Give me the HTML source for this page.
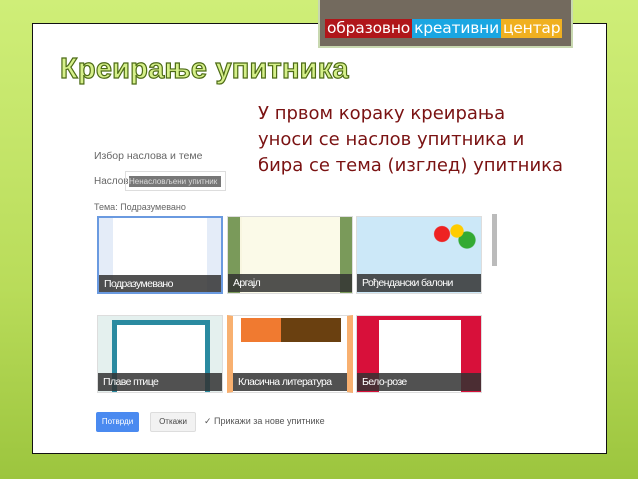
<!DOCTYPE html>
<html><head><meta charset="utf-8"><style>
*{margin:0;padding:0;box-sizing:border-box}
body{width:638px;height:479px;overflow:hidden;position:relative;font-family:"Liberation Sans",sans-serif;
background:linear-gradient(180deg,#cfee78 0%,#b9dc5a 60%,#9cc53e 100%);}
.panel{position:absolute;left:32px;top:23px;width:575px;height:431px;background:#fff;border:1.5px solid #111;}
.logo{position:absolute;left:318px;top:0;width:255px;height:48px;background:#736a5e;border:2px solid #c8d8b0;border-top:none}
.strip{position:absolute;left:5px;top:19px;height:19px;display:flex;font-size:15.5px;line-height:19px;color:#fff;font-family:"DejaVu Sans",sans-serif;letter-spacing:-.2px}
.strip span{padding:0 2px}
.title{position:absolute;left:60px;top:53px;font-size:29px;font-weight:bold;color:#d6f08a;
-webkit-text-stroke:1.2px #4d6b16;letter-spacing:.2px;font-family:"Liberation Sans",sans-serif}
.txt{position:absolute;left:258px;top:101px;font-size:18px;line-height:26px;color:#7a1212;font-family:"DejaVu Sans",sans-serif}
.s{position:absolute;color:#666;font-size:10px}
.th{position:absolute;width:126px;height:78px;border:1px solid #ddd;overflow:hidden}
.lab{position:absolute;left:0;right:0;top:57px;height:18px;background:rgba(50,50,50,.85);color:#fff;font-size:10.5px;line-height:18px;padding-left:5px;letter-spacing:-.6px}
</style></head><body>
<div class="panel"></div>
<div class="logo"><div class="strip"><span style="background:#b0161a">образовно</span><span style="background:#1aa6e2">креативни</span><span style="background:#f0b020">центар</span></div></div>
<div class="title">Креирање упитника</div>
<div class="txt">У првом кораку креирања<br>уноси се наслов упитника и<br>бира се тема (изглед) упитника</div>
<div class="s" style="left:94px;top:150px;font-size:10.5px">Избор наслова и теме</div>
<div class="s" style="left:94px;top:176px">Наслов</div>
<div style="position:absolute;left:125px;top:171px;width:101px;height:20px;border:1px solid #ddd"><div style="position:absolute;left:3px;top:4px;width:92px;height:11px;background:#777;color:#ddd;font-size:8px;line-height:11px">Ненасловљени упитник</div></div>
<div class="s" style="left:94px;top:202px;font-size:9px">Тема: Подразумевано</div>
<div style="position:absolute;left:492px;top:214px;width:5px;height:52px;background:#bbb"></div>
<div class="th" style="left:97px;top:216px;background:#e4ecf8;border:2px solid #6a9ae0"><div style="position:absolute;left:14px;top:0;width:94px;height:80px;background:#fff"></div><div class="lab">Подразумевано</div></div>
<div class="th" style="left:227px;top:216px;background:#f8f6e0"><div style="position:absolute;left:0;top:0;width:12px;height:80px;background:#7a9a5a"></div><div style="position:absolute;right:0;top:0;width:12px;height:80px;background:#7a9a5a"></div><div style="position:absolute;left:14px;top:0;width:98px;height:80px;background:#fbfae8"></div><div class="lab">Аргајл</div></div>
<div class="th" style="left:356px;top:216px;background:#cce8f8"><div style="position:absolute;right:4px;top:2px;width:50px;height:30px;background:radial-gradient(circle at 30% 50%,#e22 20%,transparent 22%),radial-gradient(circle at 60% 40%,#fc0 18%,transparent 20%),radial-gradient(circle at 80% 70%,#3a3 18%,transparent 20%)"></div><div class="lab">Рођендански балони</div></div>
<div class="th" style="left:97px;top:315px;background:#e4f0ee"><div style="position:absolute;left:14px;top:4px;width:98px;height:80px;border:5px solid #2a8aa0;background:#fff"></div><div class="lab">Плаве птице</div></div>
<div class="th" style="left:227px;top:315px;background:#fff;border-left:6px solid #f8b070;border-right:6px solid #f8b070"><div style="position:absolute;left:8px;top:2px;width:100px;height:24px;background:linear-gradient(90deg,#f07a30 40%,#6a4010 40%)"></div><div class="lab">Класична литература</div></div>
<div class="th" style="left:356px;top:315px;background:#d8103a"><div style="position:absolute;left:22px;top:4px;width:82px;height:80px;background:#fff"></div><div class="lab">Бело-розе</div></div>
<div style="position:absolute;left:96px;top:412px;width:43px;height:20px;background:#4a8af0;border-radius:2px;color:#fff;font-size:8px;line-height:20px;text-align:center">Потврди</div>
<div style="position:absolute;left:150px;top:412px;width:46px;height:20px;background:#f2f2f2;border:1px solid #ddd;border-radius:2px;color:#444;font-size:8px;line-height:18px;text-align:center">Откажи</div>
<div class="s" style="left:204px;top:416px;font-size:9px;color:#555">✓ Прикажи за нове упитнике</div>
</body></html>
